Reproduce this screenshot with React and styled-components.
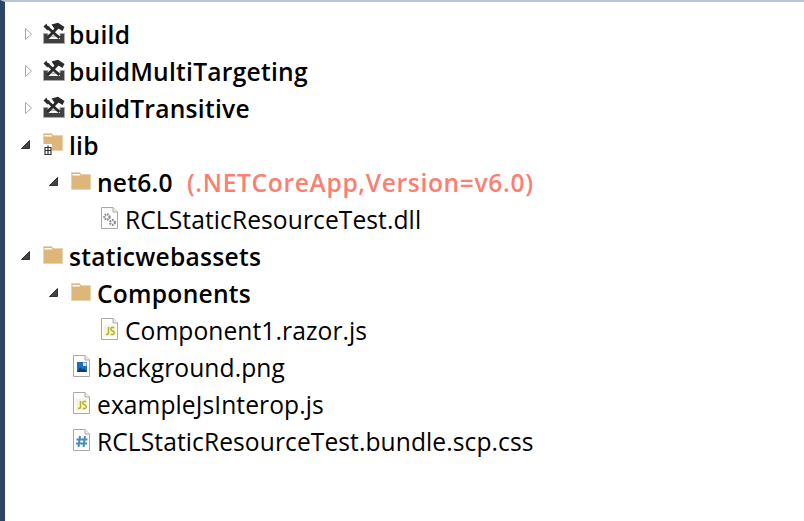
import React from 'react';
import styled, { createGlobalStyle } from 'styled-components';

const GlobalStyle = createGlobalStyle`
  html, body {
    margin: 0;
    padding: 0;
    background: #fff;
  }
`;

const Page = styled.div`
  box-sizing: border-box;
  width: 804px;
  height: 521px;
  overflow: hidden;
  background: #fff;
  border-top: 2px solid #b9c6d6;
  border-left: 5px solid #2b4468;
`;

const Tree = styled.ul`
  margin: 0;
  padding: 14px 0 0;
  list-style: none;
  font-family: 'Open Sans', 'Noto Sans', sans-serif;
  font-size: 24.6px;
  color: #000;
`;

const Row = styled.li`
  display: flex;
  align-items: center;
  height: 37px;
  padding-left: ${props => props.$depth * 28 + 15}px;
  white-space: nowrap;
`;

const Arrow = styled.svg`
  flex: none;
  width: 12px;
  height: 12px;
  margin: 0 11px 1px 0;
`;

const ArrowGap = styled.span`
  flex: none;
  width: 23px;
`;

const IconSlot = styled.svg`
  flex: none;
  width: 22px;
  height: 24px;
  margin: 0 4px 1px 0;
`;

const Label = styled.span`
  font-weight: ${props => props.$bold ? 600 : 400};
  letter-spacing: ${props => props.$bold ? '0.25px' : '0.08px'};
`;

const Framework = styled.span`
  margin-left: 14px;
  font-weight: 600;
  letter-spacing: 0.65px;
  color: #fa8072;
`;

const Expander = ({ open }) => (
  <Arrow viewBox="0 0 12 12">
    {open
      ? <path d="M9.5 1.5 V9.5 H1.5 Z" fill="#444" stroke="#333" strokeWidth="1" />
      : <path d="M5.5 0.5 L11.5 6 L5.5 11.5 Z" fill="#fff" stroke="#aaa" strokeWidth="1" />}
  </Arrow>
);

const Folder = () => (
  <IconSlot viewBox="0 0 22 24">
    <path d="M0.5 2.5 H8.5 L10.5 4.5 H19.5 V19.5 H0.5 Z" fill="#dcb67a" stroke="#e9d3ad" strokeWidth="1" />
    <path d="M1.5 4 H8.5 L9.5 5.5 H1.5 Z" fill="#fff" />
  </IconSlot>
);

const PackageFolder = () => (
  <IconSlot viewBox="0 0 22 24">
    <path d="M0.5 0.5 H8.5 L10.5 2.5 H19.5 V17.5 H0.5 Z" fill="#dcb67a" stroke="#e9d3ad" strokeWidth="1" />
    <path d="M1.5 2 H8.5 L9.5 3.5 H1.5 Z" fill="#fff" />
    <rect x="0" y="11" width="9" height="12" fill="#fff" />
    <path d="M2 14.5 H8 V21.5 H2 Z M5 12.5 V21.5 M2 17.5 H8" fill="none" stroke="#333" strokeWidth="1.2" />
  </IconSlot>
);

// tray with a crossed wrench and hammer on top
const BuildIcon = () => (
  <IconSlot viewBox="0 0 22 24">
    <path d="M0.5 11.5 H5 V14 H17 V11.5 H21.5 V21.5 H0.5 Z" fill="#404040" stroke="#aaa" strokeWidth="1" />
    <rect x="5" y="14.5" width="12" height="2.5" fill="#f4f4f4" />
    <path d="M3.5 4.5 L16.5 16" stroke="#2a2a2a" strokeWidth="2.8" />
    <path d="M15 5 L4.5 16" stroke="#2a2a2a" strokeWidth="2.8" />
    <path d="M0.5 4.5 L3.5 1.5 L4.2 4 L6.8 4.8 L4.5 8.5 Z" fill="#2a2a2a" />
    <path d="M8.5 2.5 L15 0.8 L21.5 5 L19.5 9 L15.5 6.5 L12 7.5 Z" fill="#2a2a2a" />
  </IconSlot>
);

const FileIcon = ({ children }) => (
  <IconSlot viewBox="0 0 22 24">
    <path d="M2.5 0.5 H14 L18.5 5 V21.5 H2.5 Z" fill="#fff" stroke="#a9a9a9" strokeWidth="1" />
    <path d="M14 0.5 V5 H18.5" fill="#eee" stroke="#a9a9a9" strokeWidth="1" />
    {children}
  </IconSlot>
);

const DllGlyph = () => (
  <g fill="none" stroke="#8a8a8a">
    <circle cx="8" cy="10" r="2.6" strokeWidth="2.2" strokeDasharray="1.6 0.8" />
    <circle cx="13.5" cy="15.5" r="2.4" strokeWidth="2.2" strokeDasharray="1.6 0.8" />
  </g>
);

const JsGlyph = () => (
  <>
    <rect x="4.5" y="6.5" width="12" height="12" fill="#f6f5dc" />
    <path d="M9.5 9 V15 Q9.5 16.5 7 16.5 M15.3 9.5 H13 Q11.8 9.5 11.8 11 Q11.8 12.5 13.5 12.7 Q15.3 13 15.3 14.8 Q15.3 16.5 13.6 16.5 H11.8" fill="none" stroke="#b5b02c" strokeWidth="1.5" />
  </>
);

const ImageGlyph = () => (
  <>
    <rect x="6" y="7" width="10" height="10" fill="#1c6cc0" />
    <rect x="12" y="7.5" width="3.5" height="3.5" fill="#dbe9f6" />
    <path d="M6 17 L9 12.5 L11.5 14.5 L13 13.5 L16 17 Z" fill="#123a6b" />
  </>
);

const CssGlyph = () => (
  <path d="M9 7 L7.5 18 M14 7 L12.5 18 M5.5 10.5 H16.5 M5 14.5 H16" fill="none" stroke="#4a8ab5" strokeWidth="2" />
);

const ICONS = {
  build: <BuildIcon />,
  folder: <Folder />,
  pkg: <PackageFolder />,
  dll: <FileIcon><DllGlyph /></FileIcon>,
  js: <FileIcon><JsGlyph /></FileIcon>,
  image: <FileIcon><ImageGlyph /></FileIcon>,
  css: <FileIcon><CssGlyph /></FileIcon>,
};

const ROWS = [
  { depth: 0, icon: 'build', label: 'build', bold: true, expander: 'closed' },
  { depth: 0, icon: 'build', label: 'buildMultiTargeting', bold: true, expander: 'closed' },
  { depth: 0, icon: 'build', label: 'buildTransitive', bold: true, expander: 'closed' },
  { depth: 0, icon: 'pkg', label: 'lib', bold: true, expander: 'open' },
  { depth: 1, icon: 'folder', label: 'net6.0', bold: true, expander: 'open', framework: '(.NETCoreApp,Version=v6.0)' },
  { depth: 2, icon: 'dll', label: 'RCLStaticResourceTest.dll' },
  { depth: 0, icon: 'folder', label: 'staticwebassets', bold: true, expander: 'open' },
  { depth: 1, icon: 'folder', label: 'Components', bold: true, expander: 'open' },
  { depth: 2, icon: 'js', label: 'Component1.razor.js' },
  { depth: 1, icon: 'image', label: 'background.png' },
  { depth: 1, icon: 'js', label: 'exampleJsInterop.js' },
  { depth: 1, icon: 'css', label: 'RCLStaticResourceTest.bundle.scp.css' },
];

const App = () => (
  <Page>
    <GlobalStyle />
    <Tree>
      {ROWS.map(row => (
        <Row key={row.label} $depth={row.depth}>
          {row.expander ? <Expander open={row.expander === 'open'} /> : <ArrowGap />}
          {ICONS[row.icon]}
          <Label $bold={row.bold}>{row.label}</Label>
          {row.framework && <Framework>{row.framework}</Framework>}
        </Row>
      ))}
    </Tree>
  </Page>
);

export default App;
